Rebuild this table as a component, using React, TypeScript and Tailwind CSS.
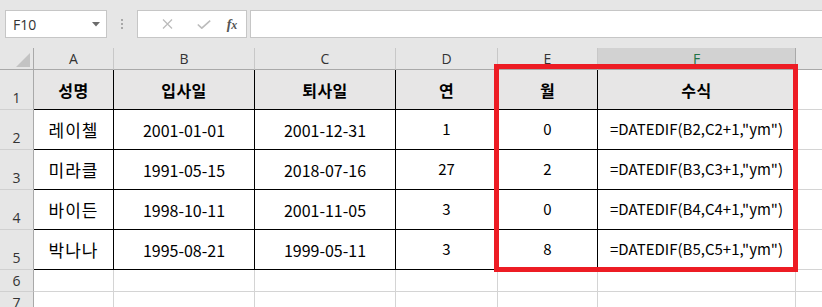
import React from "react";

const cols = ["A", "B", "C", "D", "E", "F"];
const headers = ["성명", "입사일", "퇴사일", "연", "월", "수식"];
const rows = [
  ["레이첼", "2001-01-01", "2001-12-31", "1", "0", '=DATEDIF(B2,C2+1,"ym")'],
  ["미라클", "1991-05-15", "2018-07-16", "27", "2", '=DATEDIF(B3,C3+1,"ym")'],
  ["바이든", "1998-10-11", "2001-11-05", "3", "0", '=DATEDIF(B4,C4+1,"ym")'],
  ["박나나", "1995-08-21", "1999-05-11", "3", "8", '=DATEDIF(B5,C5+1,"ym")'],
];

const uiFont = { fontFamily: '"Open Sans", "Noto Sans", sans-serif' };
const cellFont = { fontFamily: '"Noto Sans CJK KR", "Noto Sans", sans-serif' };

function RowHeader({ n, tall }: { n: number; tall?: boolean }) {
  return (
    <div
      className={`bg-[#e6e6e6] border-r border-r-[#a9a9a9] border-b border-b-[#d0d0d0] flex justify-center text-[14px] text-[#333] ${
        tall ? "items-end pb-[1px]" : "items-center"
      }`}
      style={uiFont}
    >
      {n}
    </div>
  );
}

export default function App() {
  return (
    <div className="w-[822px] h-[307px] overflow-hidden bg-white relative">
      {/* Top formula bar */}
      <div className="h-[48px] bg-[#e6e6e6] flex items-start pt-[10px]">
        <div className="ml-[5px] w-[102px] h-[28px] bg-white border border-[#c6c6c6] flex items-center pl-[7px] pr-[6px] justify-between">
          <span className="text-[14px] text-[#333]" style={uiFont}>
            F10
          </span>
          <svg width="8" height="5" viewBox="0 0 8 5">
            <path d="M0 0 L8 0 L4 4.5 Z" fill="#6b6b6b" />
          </svg>
        </div>
        <div className="w-[30px] h-[28px] flex flex-col items-center justify-center gap-[2px]">
          <div className="w-[2px] h-[2px] bg-[#a8a8a8]" />
          <div className="w-[2px] h-[2px] bg-[#a8a8a8]" />
          <div className="w-[2px] h-[2px] bg-[#a8a8a8]" />
        </div>
        <div className="w-[110px] h-[28px] bg-white border border-[#c6c6c6] flex items-center">
          <div className="w-[38px] flex justify-end pr-[3px]">
            <svg width="11" height="10" viewBox="0 0 11 10">
              <path d="M1 0.5 L10 9.5 M10 0.5 L1 9.5" stroke="#bcbcbc" strokeWidth="1.3" fill="none" />
            </svg>
          </div>
          <div className="w-[36px] flex justify-end pr-[1px]">
            <svg width="14" height="9" viewBox="0 0 14 9">
              <path d="M0.8 4.5 L4.8 8.2 L13.2 0.6" stroke="#bcbcbc" strokeWidth="1.6" fill="none" />
            </svg>
          </div>
          <div className="flex-1 flex justify-center pl-[6px]">
            <span
              className="italic text-[14px] text-[#555] font-bold"
              style={{ fontFamily: '"Liberation Serif", serif' }}
            >
              f<span className="text-[12px]">x</span>
            </span>
          </div>
        </div>
        <div className="ml-[3px] flex-1 h-[28px] bg-white border-y border-l border-[#c6c6c6]" />
      </div>

      {/* Grid */}
      <div className="grid grid-cols-[34px_80px_141px_141px_102px_100px_198px_1fr] grid-rows-[22px_40px_40px_40px_40px_40px_22px_22px]">
        {/* corner */}
        <div className="bg-[#e6e6e6] border-r border-r-[#a9a9a9] border-b border-b-[#a9a9a9] relative">
          <svg className="absolute right-[3px] bottom-[2px]" width="14" height="14" viewBox="0 0 14 14">
            <path d="M14 0 L14 14 L0 14 Z" fill="#c3c3c3" />
          </svg>
        </div>
        {cols.map((c) => (
          <div
            key={c}
            className={`border-b border-b-[#a9a9a9] border-r flex items-center justify-center text-[14px] ${
              c === "F"
                ? "bg-[#d2d2d2] border-r-[#a9a9a9] text-[#217346]"
                : "bg-[#e6e6e6] border-r-[#c8c8c8] text-[#333]"
            }`}
            style={uiFont}
          >
            {c}
          </div>
        ))}
        <div className="bg-[#e6e6e6] border-b border-b-[#a9a9a9]" />

        {/* Row 1 */}
        <RowHeader n={1} tall />
        {headers.map((h) => (
          <div
            key={h}
            className="bg-[#e7e6e6] border-r border-b border-black flex items-center justify-center text-[16px] tracking-[0.5px] font-bold text-black"
            style={cellFont}
          >
            {h}
          </div>
        ))}
        <div className="border-b border-b-[#d4d4d4]" />

        {rows.map((r, i) => (
          <React.Fragment key={i}>
            <RowHeader n={i + 2} tall />
            {r.map((v, j) => (
              <div
                key={j}
                className={`bg-white border-r border-b border-black flex items-center justify-center text-black ${
                  j === 0
                    ? "text-[17px] tracking-[1px]"
                    : j < 3
                    ? "text-[16px]"
                    : "text-[15px]"
                }`}
                style={cellFont}
              >
                {v}
              </div>
            ))}
            <div className="border-b border-b-[#d4d4d4]" />
          </React.Fragment>
        ))}

        {[6, 7].map((n) => (
          <React.Fragment key={n}>
            <RowHeader n={n} />
            {cols.map((c) => (
              <div key={c} className="border-r border-b border-[#d4d4d4]" />
            ))}
            <div className="border-b border-b-[#d4d4d4]" />
          </React.Fragment>
        ))}
      </div>

      {/* Red highlight annotation */}
      <div className="absolute left-[494px] top-[64px] w-[304px] h-[208px] border-[5px] border-[#ed1c24] pointer-events-none" />
    </div>
  );
}
